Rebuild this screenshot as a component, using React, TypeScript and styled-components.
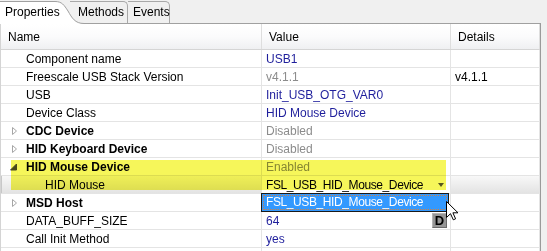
import React from 'react';
import styled, { createGlobalStyle } from 'styled-components';

const GlobalStyle = createGlobalStyle`
  html, body {
    margin: 0;
    padding: 0;
    background: #f0f0f0;
  }
  body {
    font-family: 'Liberation Sans', Arial, sans-serif;
    font-size: 12px;
    color: #000;
  }
`;

type Tone = 'link' | 'muted' | 'plain';

interface PropRow {
  name: string;
  level?: number;
  expander?: 'collapsed' | 'expanded';
  bold?: boolean;
  value: string;
  tone: Tone;
  details?: string;
  selected?: boolean;
  combo?: boolean;
  button?: string;
}

// MSD Host value sits under the open drop list, so it is left blank
const rows: PropRow[] = [
  { name: 'Component name', value: 'USB1', tone: 'link' },
  { name: 'Freescale USB Stack Version', value: 'v4.1.1', tone: 'muted', details: 'v4.1.1' },
  { name: 'USB', value: 'Init_USB_OTG_VAR0', tone: 'link' },
  { name: 'Device Class', value: 'HID Mouse Device', tone: 'link' },
  { name: 'CDC Device', expander: 'collapsed', bold: true, value: 'Disabled', tone: 'muted' },
  { name: 'HID Keyboard Device', expander: 'collapsed', bold: true, value: 'Disabled', tone: 'muted' },
  { name: 'HID Mouse Device', expander: 'expanded', bold: true, value: 'Enabled', tone: 'muted' },
  { name: 'HID Mouse', level: 1, value: 'FSL_USB_HID_Mouse_Device', tone: 'plain', selected: true, combo: true },
  { name: 'MSD Host', expander: 'collapsed', bold: true, value: '', tone: 'muted' },
  { name: 'DATA_BUFF_SIZE', value: '64', tone: 'link', button: 'D' },
  { name: 'Call Init Method', value: 'yes', tone: 'link' },
  { name: '', value: '', tone: 'plain' },
];

const toneColor: Record<Tone, string> = {
  link: '#1f1f9c',
  muted: '#8c8c8c',
  plain: '#000',
};

const Frame = styled.div`
  position: relative;
  width: 547px;
  height: 251px;
  overflow: hidden;
  background: #f0f0f0;
`;

const TabBar = styled.div`
  display: flex;
  height: 22px;
  padding-top: 1px;
`;

const ActiveTab = styled.div`
  position: relative;
  z-index: 2;
  width: 79px;
  padding-left: 5px;
  line-height: 22px;

  svg {
    position: absolute;
    left: 0;
    top: 0;
    z-index: -1;
  }
`;

const Tab = styled.div<{ $width: number; $pad: number; $overlap?: number }>`
  width: ${({ $width }) => $width}px;
  margin-left: ${({ $overlap }) => ($overlap ? -$overlap : 0)}px;
  padding-left: ${({ $pad }) => $pad}px;
  line-height: 21px;
  border-top: 1px solid #a8a8a8;
  border-right: 1px solid #a8a8a8;
  border-top-right-radius: 5px;
  background: #f0f0f0;
  box-sizing: border-box;
  white-space: nowrap;
`;

const Panel = styled.div`
  width: 541px;
  box-sizing: border-box;
  border-top: 1px solid #a0a0a0;
  border-left: 1px solid #d4d4d4;
  border-right: 1px solid #9a9a9a;
  background: #fff;
  height: 228px;
`;

const columns = '261px 189px 89px';

const HeaderRow = styled.div`
  display: grid;
  grid-template-columns: ${columns};
  height: 26px;
  box-sizing: border-box;
  border-bottom: 1px solid #d5d5d5;
  background: linear-gradient(#ffffff 0%, #fbfbfc 50%, #eff0f2 100%);
`;

const HeaderCell = styled.div`
  display: flex;
  align-items: center;
  padding-left: 7px;
  border-right: 1px solid #dedede;
`;

const Row = styled.div<{ $selected?: boolean }>`
  display: grid;
  grid-template-columns: ${columns};
  height: 18px;
  box-sizing: border-box;
  border-bottom: 1px solid #e4e4e4;
  background: ${({ $selected }) =>
    $selected ? 'linear-gradient(#f8f8f8, #e3e3e3)' : 'transparent'};
  box-shadow: ${({ $selected }) => ($selected ? 'inset 1px 0 0 #c8c8c8' : 'none')};
`;

const NameCell = styled.div<{ $level: number; $bold?: boolean }>`
  display: flex;
  align-items: center;
  padding-left: ${({ $level }) => 8 + $level * 19}px;
  font-weight: ${({ $bold }) => ($bold ? 'bold' : 'normal')};
  border-right: 1px solid #e4e4e4;
  white-space: nowrap;
  overflow: hidden;
`;

const Expander = styled.span`
  display: flex;
  align-items: center;
  width: 17px;
  height: 100%;
`;

const ValueCell = styled.div<{ $tone: Tone; $combo?: boolean }>`
  position: relative;
  display: flex;
  align-items: center;
  justify-content: space-between;
  padding-left: 4px;
  padding-right: 2px;
  color: ${({ $tone }) => toneColor[$tone]};
  background: ${({ $combo }) => ($combo ? '#fff' : 'transparent')};
  letter-spacing: ${({ $combo }) => ($combo ? '-0.4px' : 'normal')};
  border-right: 1px solid #e4e4e4;
  white-space: nowrap;
`;

const DetailsCell = styled.div`
  display: flex;
  align-items: center;
  padding-left: 4px;
  border-right: 1px solid #e4e4e4;
`;

const ComboArrow = styled.span`
  width: 0;
  height: 0;
  margin-right: 4px;
  border-left: 3.5px solid transparent;
  border-right: 3.5px solid transparent;
  border-top: 4px solid #5a5a5a;
`;

const DropList = styled.div`
  position: absolute;
  z-index: 3;
  left: -1px;
  top: 17px;
  width: 188px;
  height: 19px;
  box-sizing: border-box;
  border: 1px solid #1a1a1a;
  background: #3399ff;
  padding: 1px;
`;

const DropItem = styled.div`
  height: 100%;
  box-sizing: border-box;
  border: 1px dotted #d08040;
  color: #fff;
  line-height: 13px;
  padding-left: 2px;
`;

const SmallButton = styled.span`
  display: flex;
  align-items: center;
  justify-content: center;
  width: 15px;
  height: 15px;
  margin-right: 1px;
  box-sizing: border-box;
  background: #969696;
  border: 1px solid #6a6a6a;
  border-top-color: #b4b4b4;
  border-left-color: #b4b4b4;
  color: #000;
  font-weight: bold;
  font-size: 13px;
  letter-spacing: 0;
`;

const Marker = styled.div`
  position: absolute;
  z-index: 4;
  left: 11px;
  top: 160px;
  width: 435px;
  height: 30px;
  background: #f6f65a;
  mix-blend-mode: multiply;
  filter: blur(0.6px);
  pointer-events: none;
`;

const Cursor = styled.svg`
  position: absolute;
  z-index: 5;
  left: 446px;
  top: 201px;
`;

const CollapsedIcon = () => (
  <svg width="8" height="10" viewBox="0 0 8 10">
    <path d="M3.5 1.5 L7.5 5 L3.5 8.5 Z" fill="#fff" stroke="#a6a6a6" />
  </svg>
);

const ExpandedIcon = () => (
  <svg width="9" height="10" viewBox="0 0 9 10">
    <path d="M7.5 2 L7.5 8 L1.5 8 Z" fill="#4a4a4a" stroke="#4a4a4a" strokeLinejoin="round" />
  </svg>
);

const App = () => (
  <Frame>
    <GlobalStyle />
    <TabBar>
      <ActiveTab>
        <svg width="84" height="23" viewBox="0 0 84 23">
          <path
            d="M0 23 L0 0.5 L55 0.5 C62 0.5 64 4 68 10 C72 17 75 22.5 84 22.5 L84 23 Z"
            fill="#fff"
          />
          <path
            d="M0 0.5 L55 0.5 C62 0.5 64 4 68 10 C72 17 75 22.5 84 22.5"
            fill="none"
            stroke="#a0a0a0"
          />
        </svg>
        Properties
      </ActiveTab>
      <Tab $width={58} $pad={8} $overlap={14}>Methods</Tab>
      <Tab $width={42} $pad={5}>Events</Tab>
    </TabBar>
    <Panel>
      <HeaderRow>
        <HeaderCell>Name</HeaderCell>
        <HeaderCell>Value</HeaderCell>
        <HeaderCell>Details</HeaderCell>
      </HeaderRow>
      {rows.map((row, i) => (
        <Row key={i} $selected={row.selected}>
          <NameCell $level={row.level ?? 0} $bold={row.bold}>
            <Expander>
              {row.expander === 'collapsed' && <CollapsedIcon />}
              {row.expander === 'expanded' && <ExpandedIcon />}
            </Expander>
            {row.name}
          </NameCell>
          <ValueCell $tone={row.tone} $combo={row.combo}>
            <span>{row.value}</span>
            {row.combo && <ComboArrow />}
            {row.button && <SmallButton>{row.button}</SmallButton>}
            {row.combo && (
              <DropList>
                <DropItem>{row.value}</DropItem>
              </DropList>
            )}
          </ValueCell>
          <DetailsCell>{row.details}</DetailsCell>
        </Row>
      ))}
    </Panel>
    <Marker />
    <Cursor width="13" height="20" viewBox="0 0 13 20">
      <path
        d="M0.5 0.5 L0.5 16.5 L4.5 12.7 L7.3 18.8 L9.6 17.8 L6.9 11.8 L12 11.8 Z"
        fill="#fff"
        stroke="#000"
        strokeLinejoin="round"
      />
    </Cursor>
  </Frame>
);

export default App;
